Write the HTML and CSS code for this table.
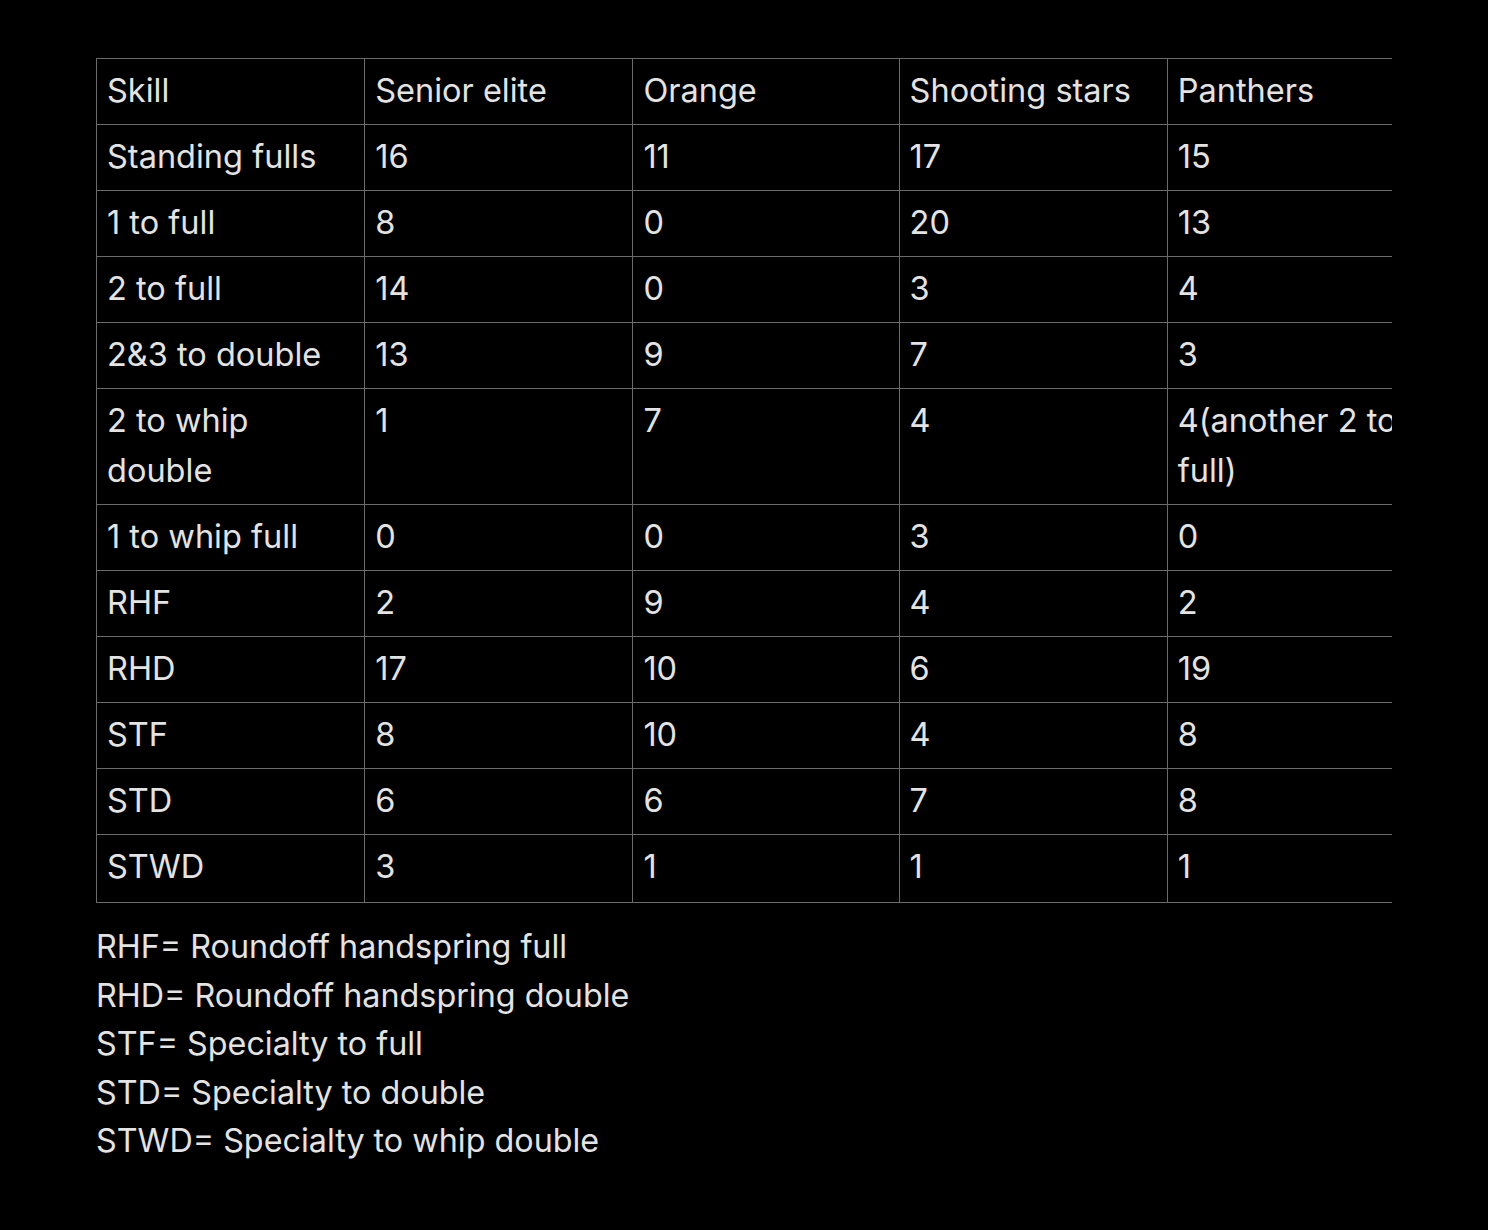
FILE: index.html
```html
<!DOCTYPE html>
<html>
<head>
<meta charset="utf-8">
<link rel="stylesheet" href="styles.css">
</head>
<body>
<div class="page">
  <div class="table-wrap">
    <table class="skills">
      <colgroup>
        <col class="c1"><col class="c2"><col class="c3"><col class="c4"><col class="c5">
      </colgroup>
      <tr><td>Skill</td><td>Senior elite</td><td>Orange</td><td>Shooting stars</td><td>Panthers</td></tr>
      <tr><td>Standing fulls</td><td>16</td><td>11</td><td>17</td><td>15</td></tr>
      <tr><td>1 to full</td><td>8</td><td>0</td><td>20</td><td>13</td></tr>
      <tr><td>2 to full</td><td>14</td><td>0</td><td>3</td><td>4</td></tr>
      <tr><td>2&amp;3 to double</td><td>13</td><td>9</td><td>7</td><td>3</td></tr>
      <tr><td>2 to whip double</td><td>1</td><td>7</td><td>4</td><td>4(another 2 to full)</td></tr>
      <tr><td>1 to whip full</td><td>0</td><td>0</td><td>3</td><td>0</td></tr>
      <tr><td>RHF</td><td>2</td><td>9</td><td>4</td><td>2</td></tr>
      <tr><td>RHD</td><td>17</td><td>10</td><td>6</td><td>19</td></tr>
      <tr><td>STF</td><td>8</td><td>10</td><td>4</td><td>8</td></tr>
      <tr><td>STD</td><td>6</td><td>6</td><td>7</td><td>8</td></tr>
      <tr><td>STWD</td><td>3</td><td>1</td><td>1</td><td>1</td></tr>
    </table>
  </div>
  <div class="legend">
    <p>RHF= Roundoff handspring full</p>
    <p>RHD= Roundoff handspring double</p>
    <p>STF= Specialty to full</p>
    <p>STD= Specialty to double</p>
    <p>STWD= Specialty to whip double</p>
  </div>
</div>
</body>
</html>
```
FILE: styles.css
```css
html, body {
  margin: 0;
  padding: 0;
  background: #000;
}
body {
  width: 1488px;
  height: 1230px;
  overflow: hidden;
  font-family: Inter, "Noto Sans", sans-serif;
  color: #e3e3e3;
}
.page {
  padding: 58px 0 0 96px;
}
.table-wrap {
  width: 1296px;
  overflow: hidden;
}
.skills {
  border-collapse: collapse;
  table-layout: fixed;
  width: 1340px;
  font-size: 32.5px;
  line-height: 50px;
}
.c1, .c2, .c4, .c5 { width: 268px; }
.c3 { width: 266px; }
.skills td {
  border: 1px solid #6b6b6b;
  padding: 7px 10px 8px 10px;
  vertical-align: top;
  height: 50px;
}
.skills tr:last-child td {
  padding-bottom: 10px;
}
.legend {
  margin-top: 20px;
  font-size: 32.3px;
  line-height: 48.5px;
}
.legend p {
  margin: 0;
}
```
